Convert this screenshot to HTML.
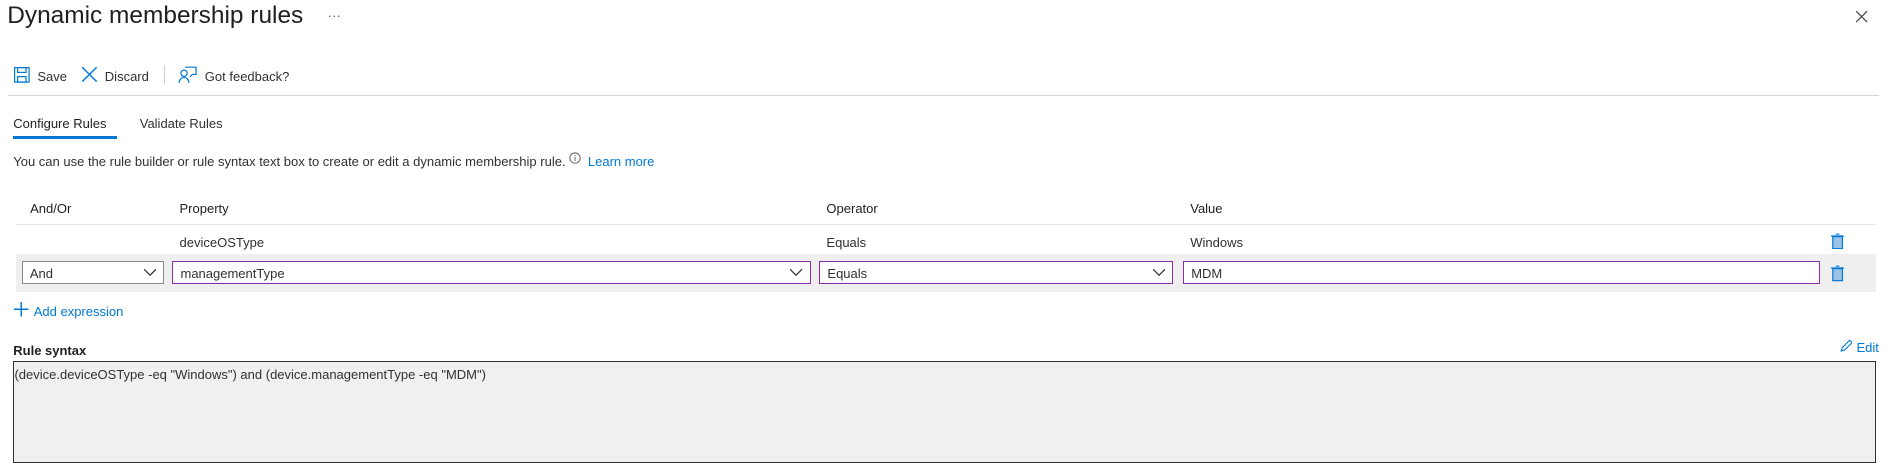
<!DOCTYPE html>
<html><head><meta charset="utf-8"><style>
html,body{margin:0;padding:0;background:#fff;overflow:hidden}
body{width:1889px;height:474px}
#w{zoom:1.2047;position:relative;width:1568px;height:393px;font-family:"Liberation Sans",sans-serif;font-size:10.8px;color:#323130}
.a{position:absolute;white-space:nowrap}
.b{font-weight:bold}
.blue{color:#0078d4}
.box{position:absolute;height:19px;border:1px solid #8a8886;background:#fff;box-sizing:border-box}
.pp{border-color:#8a2da8}
.box span{position:absolute;left:6px;top:3px}
.chev{position:absolute;right:6px;top:5px}
</style></head><body><div id="w">
<div class="a" style="left:6px;top:2px;font-size:20.3px;color:#201f1e">Dynamic membership rules</div>
<div class="a" style="left:272px;top:7px;font-size:11px;color:#605e5c">···</div>
<svg class="a" style="left:1540px;top:8px" width="11" height="11"><path d="M1 1L10 10M10 1L1 10" stroke="#444" stroke-width="1"/></svg>

<svg class="a" style="left:12px;top:56px" width="13" height="13" viewBox="0 0 13 13"><rect x="0.5" y="0.5" width="12" height="12" fill="none" stroke="#0078d4"/><rect x="3" y="0.5" width="7" height="4" fill="none" stroke="#0078d4"/><rect x="3" y="8" width="7" height="4.5" fill="none" stroke="#0078d4"/></svg>
<div class="a" style="left:31px;top:57px">Save</div>
<svg class="a" style="left:67px;top:55px" width="14" height="14"><path d="M1 1L13 13M13 1L1 13" stroke="#0078d4" stroke-width="1.2"/></svg>
<div class="a" style="left:87px;top:57px">Discard</div>
<div class="a" style="left:136px;top:54px;width:1px;height:16px;background:#d2d0ce"></div>
<svg class="a" style="left:148px;top:55px" width="16" height="15" viewBox="0 0 16 15"><circle cx="5" cy="6" r="2.6" fill="none" stroke="#0078d4"/><path d="M1 14c0-3 2-4.5 4-4.5s4 1.5 4 4.5M6 1h9v6h-3l-2 2" fill="none" stroke="#0078d4"/></svg>
<div class="a" style="left:170px;top:57px">Got feedback?</div>
<div class="a" style="left:7px;top:79px;width:1553px;height:1px;background:#d6d6d6"></div>

<div class="a" style="left:11px;top:96px;color:#201f1e">Configure Rules</div>
<div class="a" style="left:11px;top:113px;width:86px;height:2px;background:#0078d4"></div>
<div class="a" style="left:116px;top:96px">Validate Rules</div>

<div class="a" style="left:11px;top:128px">You can use the rule builder or rule syntax text box to create or edit a dynamic membership rule.</div>
<svg class="a" style="left:472px;top:126px" width="10" height="10"><circle cx="5" cy="5" r="4.3" fill="none" stroke="#605e5c" stroke-width=".8"/><path d="M5 4v3.5M5 2.5v.8" stroke="#605e5c" stroke-width=".8"/></svg>
<div class="a blue" style="left:488px;top:128px">Learn more</div>

<div class="a" style="left:25px;top:167px;color:#201f1e">And/Or</div>
<div class="a" style="left:149px;top:167px;color:#201f1e">Property</div>
<div class="a" style="left:686px;top:167px;color:#201f1e">Operator</div>
<div class="a" style="left:988px;top:167px;color:#201f1e">Value</div>
<div class="a" style="left:13px;top:186px;width:1544px;height:1px;background:#e6e6e6"></div>

<div class="a" style="left:149px;top:195px">deviceOSType</div>
<div class="a" style="left:686px;top:195px">Equals</div>
<div class="a" style="left:988px;top:195px">Windows</div>
<svg class="a" style="left:1520px;top:193px" width="11" height="14" viewBox="0 0 11 14"><rect x="1.5" y="3" width="8" height="10" fill="#9cc3e6" stroke="#0078d4"/><path d="M0 2.5h11M4 1h3" stroke="#0078d4"/></svg>

<div class="a" style="left:13px;top:211px;width:1544px;height:31px;background:#efefef"></div>
<div class="box" style="left:18px;top:217px;width:118px"><span>And</span><svg class="chev" width="10" height="7"><path d="M0 1l5 5 5-5" fill="none" stroke="#333"/></svg></div>
<div class="box pp" style="left:143px;top:217px;width:530px"><span>managementType</span><svg class="chev" width="10" height="7"><path d="M0 1l5 5 5-5" fill="none" stroke="#333"/></svg></div>
<div class="box pp" style="left:680px;top:217px;width:294px"><span>Equals</span><svg class="chev" width="10" height="7"><path d="M0 1l5 5 5-5" fill="none" stroke="#333"/></svg></div>
<div class="box pp" style="left:982px;top:217px;width:529px"><span>MDM</span></div>
<svg class="a" style="left:1520px;top:220px" width="11" height="14" viewBox="0 0 11 14"><rect x="1.5" y="3" width="8" height="10" fill="#9cc3e6" stroke="#0078d4"/><path d="M0 2.5h11M4 1h3" stroke="#0078d4"/></svg>

<svg class="a" style="left:12px;top:251px" width="12" height="12"><path d="M6 0v12M0 6h12" stroke="#0078d4" stroke-width="1.2"/></svg>
<div class="a blue" style="left:28px;top:252px">Add expression</div>

<div class="a b" style="left:11px;top:285px;color:#201f1e">Rule syntax</div>
<svg class="a" style="left:1527px;top:281px" width="10" height="11"><path d="M1 10l1-3 6-6 2 2-6 6z" fill="none" stroke="#0078d4" stroke-width=".9"/></svg>
<div class="a blue" style="left:1541px;top:282px">Edit</div>
<div class="a" style="left:11px;top:300px;width:1546px;height:84px;background:#f0f0f0;border:1px solid #333;box-sizing:border-box"></div>
<div class="a" style="left:12px;top:305px">(device.deviceOSType -eq "Windows") and (device.managementType -eq "MDM")</div>
</div></body></html>
